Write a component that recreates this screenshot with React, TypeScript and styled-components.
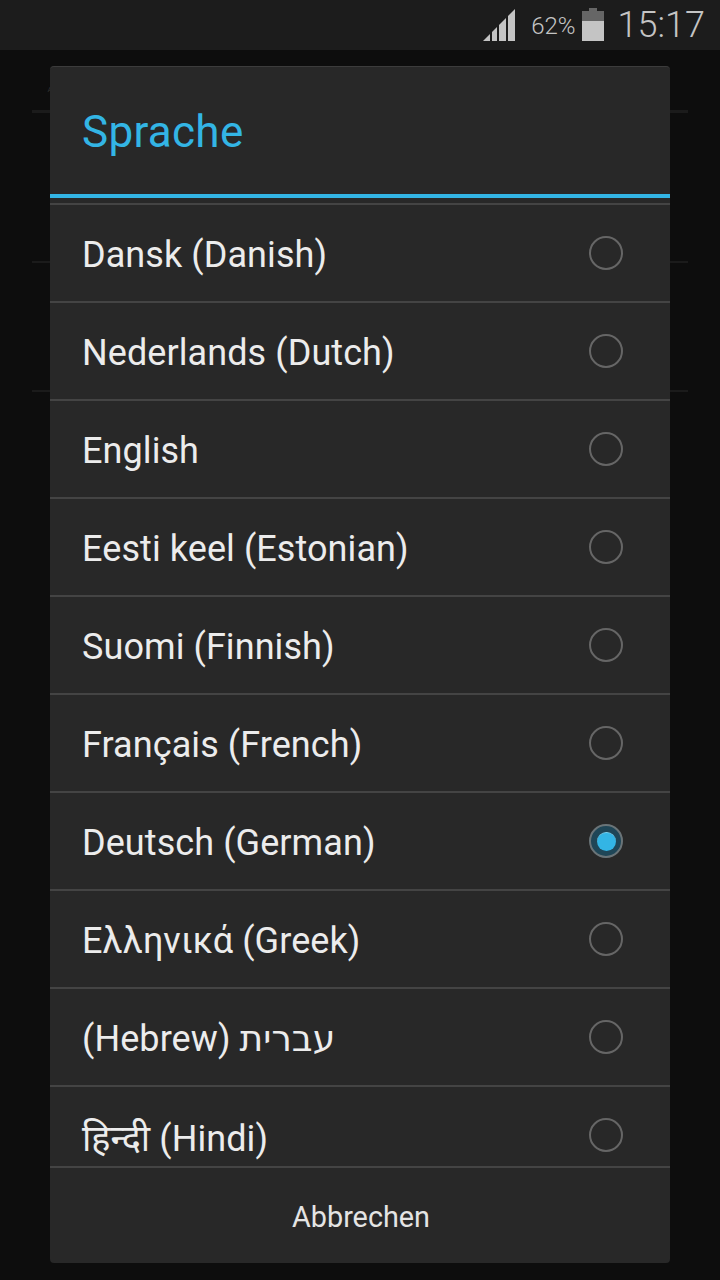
import React from 'react';
import styled, { createGlobalStyle } from 'styled-components';

const GlobalStyle = createGlobalStyle`
  html, body {
    margin: 0;
    padding: 0;
    background: #0d0d0d;
  }
  * {
    box-sizing: border-box;
  }
`;

const Screen = styled.div`
  position: relative;
  width: 720px;
  height: 1280px;
  overflow: hidden;
  background: #0d0d0d;
  font-family: Roboto, "Noto Sans", "DejaVu Sans", sans-serif;
`;

const StatusBar = styled.div`
  height: 50px;
  background: #1c1c1c;
  display: flex;
  align-items: center;
  justify-content: flex-end;
  padding-right: 15px;
  color: #c4c4c4;
`;

const SignalIcon = styled.svg`
  width: 34px;
  height: 34px;
`;

const Percent = styled.span`
  font-size: 24px;
  font-weight: 300;
  margin-left: 15px;
  padding-top: 2px;
  line-height: 1;
`;

const BatteryIcon = styled.svg`
  width: 22px;
  height: 33px;
  margin-left: 6px;
  margin-top: -2px;
`;

const Clock = styled.span`
  font-size: 36px;
  line-height: 1;
  margin-left: 14px;
  font-weight: 300;
`;

const DimmedPage = styled.div`
  padding: 33px 32px 0;
  display: flex;
  flex-direction: column;
`;

const DimmedTitle = styled.div`
  height: 27px;
  line-height: 14px;
  padding-left: 15.5px;
  font-size: 8px;
  color: #333333;
`;

const DimmedLine = styled.div<{ $height: number; $gap: number }>`
  height: ${p => p.$height}px;
  margin-bottom: ${p => p.$gap}px;
  background: #1b1b1b;
`;

const Dialog = styled.div`
  position: absolute;
  left: 50px;
  top: 66px;
  width: 620px;
  height: 1197px;
  background: #282828;
  border-top: 1px solid #3c3c3c;
  border-radius: 4px;
  display: flex;
  flex-direction: column;
  overflow: hidden;
`;

const Header = styled.div`
  height: 131px;
  flex-shrink: 0;
  display: flex;
  align-items: center;
  padding-left: 32px;
  padding-top: 2px;
  border-bottom: 4px solid #33b5e5;
  color: #33b5e5;
  font-size: 44px;
  letter-spacing: 0.3px;
`;

const List = styled.div`
  flex: 1;
  min-height: 0;
  overflow: hidden;
  margin-top: 5px;
`;

const Row = styled.div`
  height: 98px;
  border-top: 2px solid #444444;
  display: flex;
  align-items: center;
  justify-content: space-between;
  padding: 0 47px 0 32px;
  color: #ececec;
  font-size: 36px;
  letter-spacing: 0.08px;
`;

const Label = styled.span<{ $rtl?: boolean }>`
  display: inline-block;
  padding-top: 4px;
  direction: ${p => (p.$rtl ? 'rtl' : 'ltr')};
`;

const Radio = styled.span<{ $on?: boolean }>`
  width: 34px;
  height: 34px;
  border-radius: 50%;
  border: 2px solid #666666;
  display: flex;
  align-items: center;
  justify-content: center;
  background: ${p => (p.$on ? '#1f4657' : 'transparent')};
  border-color: ${p => (p.$on ? '#6a7478' : '#666666')};
`;

const RadioDot = styled.span`
  width: 19px;
  height: 19px;
  border-radius: 50%;
  background: #33b5e5;
  border-top: 1px solid #7fd3f0;
`;

const Footer = styled.div`
  height: 97px;
  flex-shrink: 0;
  border-top: 2px solid #444444;
  display: flex;
  align-items: center;
  justify-content: center;
  padding: 3px 0 0 2px;
  color: #e4e4e4;
  font-size: 28.8px;
`;

const languages = [
  { label: 'Dansk (Danish)' },
  { label: 'Nederlands (Dutch)' },
  { label: 'English' },
  { label: 'Eesti keel (Estonian)' },
  { label: 'Suomi (Finnish)' },
  { label: 'Français (French)' },
  { label: 'Deutsch (German)', selected: true },
  { label: 'Ελληνικά (Greek)' },
  { label: 'עברית (Hebrew)', rtl: true },
  { label: 'हिन्दी (Hindi)' },
];

const App: React.FC = () => {
  return (
    <Screen>
      <GlobalStyle />
      <StatusBar>
        <SignalIcon viewBox="0 0 34 34">
          <path d="M1 33 L8 26 V33 Z" fill="#c4c4c4" />
          <path d="M10 24 L15 19 V33 H10 Z" fill="#c4c4c4" />
          <path d="M17 17 L24 10 V33 H17 Z" fill="#c4c4c4" />
          <path d="M26 8 L33 1 V33 H26 Z" fill="#c4c4c4" />
        </SignalIcon>
        <Percent>62%</Percent>
        <BatteryIcon viewBox="0 0 22 33">
          <path d="M0 3 H7 V0 H15 V3 H22 V13 H0 Z" fill="#666666" />
          <rect x="0" y="13" width="22" height="20" fill="#c4c4c4" />
        </BatteryIcon>
        <Clock>15:17</Clock>
      </StatusBar>

      <DimmedPage>
        <DimmedTitle>A</DimmedTitle>
        <DimmedLine $height={3} $gap={148} />
        <DimmedLine $height={2} $gap={127} />
        <DimmedLine $height={2} $gap={0} />
      </DimmedPage>

      <Dialog>
        <Header>Sprache</Header>
        <List>
          {languages.map(lang => (
            <Row key={lang.label}>
              <Label $rtl={lang.rtl}>{lang.label}</Label>
              <Radio $on={lang.selected}>{lang.selected && <RadioDot />}</Radio>
            </Row>
          ))}
        </List>
        <Footer>Abbrechen</Footer>
      </Dialog>
    </Screen>
  );
};

export default App;
